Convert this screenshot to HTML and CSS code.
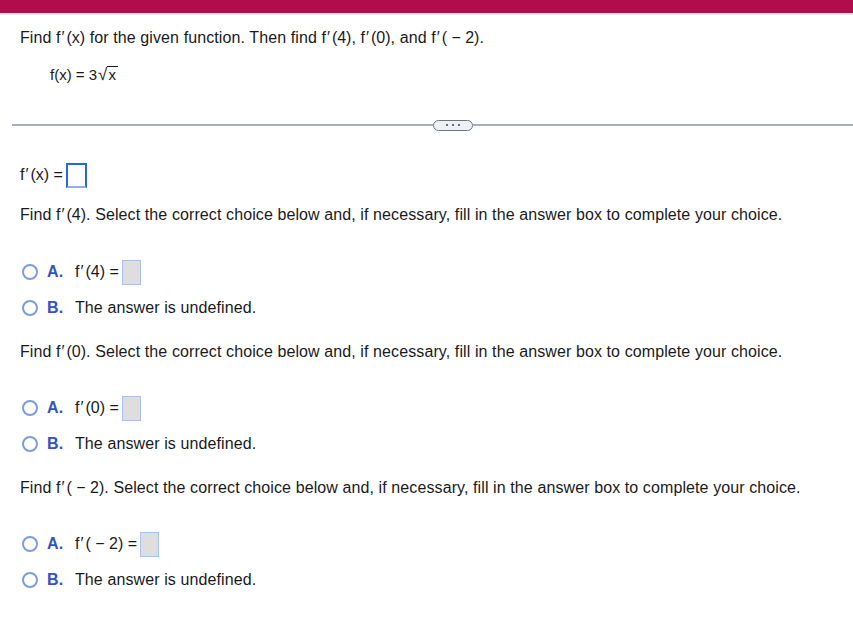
FILE: index.html
```html
<!DOCTYPE html>
<html>
<head>
<meta charset="utf-8">
<link rel="stylesheet" href="styles.css">
</head>
<body>
<div class="topbar"></div>
<div class="content">
  <div class="line q1">Find <span class="m">f<span class="p">′</span>(x)</span> for the given function. Then find <span class="m">f<span class="p">′</span>(4)</span>, <span class="m">f<span class="p">′</span>(0)</span>, and <span class="m">f<span class="p">′</span>( − 2)</span>.</div>
  <div class="line fx"><span class="m">f(x) = 3<span class="rad">√</span><span class="over">x</span></span></div>
</div>
<div class="divider">
  <div class="rule left"></div>
  <div class="pill"><span class="dot"></span><span class="dot"></span><span class="dot"></span></div>
  <div class="rule"></div>
</div>
<div class="content">
  <div class="row ans"><span class="m">f<span class="p">′</span>(x) =</span><span class="box active"></span></div>

  <div class="line find f4">Find <span class="m">f<span class="p">′</span>(4)</span>. Select the correct choice below and, if necessary, fill in the answer box to complete your choice.</div>
  <div class="row choice a1"><span class="radio"></span><span class="letter">A.</span><span class="m">f<span class="p">′</span>(4) =</span><span class="box"></span></div>
  <div class="row choice b"><span class="radio"></span><span class="letter">B.</span><span>The answer is undefined.</span></div>

  <div class="line find">Find <span class="m">f<span class="p">′</span>(0)</span>. Select the correct choice below and, if necessary, fill in the answer box to complete your choice.</div>
  <div class="row choice a2"><span class="radio"></span><span class="letter">A.</span><span class="m">f<span class="p">′</span>(0) =</span><span class="box"></span></div>
  <div class="row choice b"><span class="radio"></span><span class="letter">B.</span><span>The answer is undefined.</span></div>

  <div class="line find">Find <span class="m">f<span class="p">′</span>( − 2)</span>. Select the correct choice below and, if necessary, fill in the answer box to complete your choice.</div>
  <div class="row choice a2"><span class="radio"></span><span class="letter">A.</span><span class="m">f<span class="p">′</span>( − 2) =</span><span class="box"></span></div>
  <div class="row choice b"><span class="radio"></span><span class="letter">B.</span><span>The answer is undefined.</span></div>
</div>
</body>
</html>
```

FILE: styles.css
```css
html, body {
  margin: 0;
  padding: 0;
  background: #ffffff;
}
body {
  font-family: "Liberation Sans", Arial, sans-serif;
  font-size: 16px;
  letter-spacing: 0.1px;
  color: #1a1a1a;
  width: 853px;
  overflow: hidden;
}
.topbar {
  height: 13px;
  background: #b10c4c;
  border-bottom: 2px solid #e4e7ee;
}
.content {
  padding-left: 20px;
}
.line {
  height: 20px;
  line-height: 20px;
  white-space: nowrap;
}
.m {
  font-size: 16px;
  letter-spacing: 0;
}
.p {
  margin: 0 2px 0 1px;
}
.q1 {
  margin-top: 13px;
}
.fx {
  margin-top: 17px;
  padding-left: 30px;
}
.fx .m {
  font-size: 15px;
}
.rad {
  font-size: 17px;
  margin-left: 1px;
}
.over {
  border-top: 1px solid #1a1a1a;
  padding: 0 2px 0 1px;
  line-height: 15px;
  display: inline-block;
}
.divider {
  margin-top: 30px;
  margin-left: 12px;
  height: 20px;
  display: flex;
  align-items: center;
}
.rule {
  flex: 1;
  height: 2px;
  background: #a9adbd;
}
.rule.left {
  flex: none;
  width: 421px;
}
.pill {
  width: 38px;
  height: 9px;
  border: 1px solid #6e7685;
  border-radius: 6px;
  background: #eef0f4;
  display: flex;
  align-items: center;
  justify-content: center;
  gap: 4px;
}
.dot {
  width: 2px;
  height: 2px;
  background: #3b3f48;
  border-radius: 1px;
}
.row {
  display: flex;
  align-items: center;
  white-space: nowrap;
}
.ans {
  margin-top: 27px;
  height: 26px;
}
.box {
  display: inline-block;
  box-sizing: border-box;
  margin-left: 3px;
}
.box.active {
  width: 21px;
  height: 25px;
  border: 2px solid #2a67d6;
  border-bottom-color: #8fb0ea;
  background: #fff;
}
.choice .box {
  width: 19px;
  height: 25px;
  border: 1px solid #a9c1f0;
  background: #dedede;
}
.find {
  margin-top: 17px;
}
.f4 {
  margin-top: 17px;
}
.content > .find:not(.f4) {
  margin-top: 24px;
}
.choice {
  height: 26px;
  padding-left: 2px;
}
.a1 {
  margin-top: 34px;
}
.a2 {
  margin-top: 33px;
}
.b {
  margin-top: 13px;
  height: 20px;
}
.radio {
  width: 12px;
  height: 12px;
  border: 2px solid #7d9ae3;
  border-radius: 50%;
  box-sizing: content-box;
  margin-right: 9px;
}
.letter {
  font-weight: bold;
  color: #3552c4;
  width: 28px;
}
```
